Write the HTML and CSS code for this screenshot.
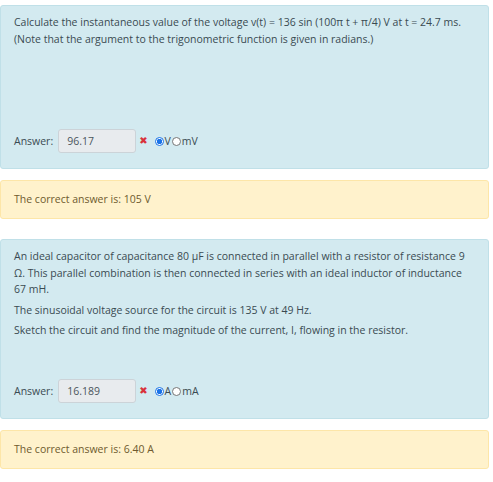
FILE: index.html
```html
<!DOCTYPE html>
<html>
<head>
<meta charset="utf-8">
<link rel="stylesheet" href="styles.css">
</head>
<body>
<div class="page">
  <div class="que">
    <div class="formulation q1">
      <p class="qtext">Calculate the instantaneous value of the voltage v(t) = 136 sin (100π t + π/4) V at t = 24.7 ms.<br>(Note that the argument to the trigonometric function is given in radians.)</p>
      <div class="answer-row">
        <span class="label">Answer:</span>
        <span class="input">96.17</span>
        <span class="wrong">&#x2716;</span>
        <span class="radio checked"></span><span class="unit">V</span>
        <span class="radio"></span><span class="unit">mV</span>
      </div>
    </div>
    <div class="outcome">The correct answer is: 105 V</div>
  </div>
  <div class="que">
    <div class="formulation q2">
      <p class="qtext">An ideal capacitor of capacitance 80 µF is connected in parallel with a resistor of resistance 9 Ω. This parallel combination is then connected in series with an ideal inductor of inductance 67 mH.</p>
      <p class="qtext">The sinusoidal voltage source for the circuit is 135 V at 49 Hz.</p>
      <p class="qtext">Sketch the circuit and find the magnitude of the current, I, flowing in the resistor.</p>
      <div class="answer-row">
        <span class="label">Answer:</span>
        <span class="input">16.189</span>
        <span class="wrong">&#x2716;</span>
        <span class="radio checked"></span><span class="unit">A</span>
        <span class="radio"></span><span class="unit">mA</span>
      </div>
    </div>
    <div class="outcome">The correct answer is: 6.40 A</div>
  </div>
</div>
</body>
</html>
```
FILE: styles.css
```css
html, body {
  margin: 0;
  padding: 0;
  background: #ffffff;
}
body {
  font-family: "Open Sans", "Liberation Sans", sans-serif;
  font-size: 10.5px;
  line-height: 16.5px;
  color: #3a4a52;
}
.page {
  width: 489px;
  padding-top: 5px;
}
.que {
  margin-bottom: 20px;
}
.formulation {
  background: #d3eaf0;
  border: 1px solid #c0e0e8;
  border-radius: 3px;
  padding: 8px 13px 15px 13px;
}
.q1 { height: 139px; display: flex; flex-direction: column; }
.q1 .answer-row { margin-top: auto; }
.qtext {
  margin: 0 0 4px 0;
}
.q2 .answer-row { margin-top: 40.5px; }
.answer-row {
  display: flex;
  align-items: center;
  height: 24px;
}
.label {
  margin-right: 5px;
}
.input {
  box-sizing: border-box;
  width: 78px;
  height: 24px;
  background: #e8ebee;
  border: 1px solid #ccd3d8;
  border-radius: 3px;
  padding: 0 8px;
  line-height: 22px;
  color: #4a555c;
}
.wrong {
  color: #d9323a;
  font-size: 10px;
  font-weight: bold;
  margin-left: 3px;
  margin-right: 7px;
  font-family: "DejaVu Sans", sans-serif;
}
.radio {
  box-sizing: border-box;
  width: 9px;
  height: 9px;
  border-radius: 50%;
  border: 1px solid #777;
  background: #fff;
  margin-right: 1px;
}
.radio.checked {
  border: 1px solid #1a73e8;
  background: radial-gradient(circle, #1a73e8 0 2.5px, #fff 3px);
}
.unit {
  margin-right: 1px;
}
.outcome {
  margin-top: 11px;
  background: #fff2cc;
  border: 1px solid #fde6a8;
  border-radius: 3px;
  padding: 10px 13px 10px 13px;
  line-height: 17px;
  color: #6e5a2e;
}
```
